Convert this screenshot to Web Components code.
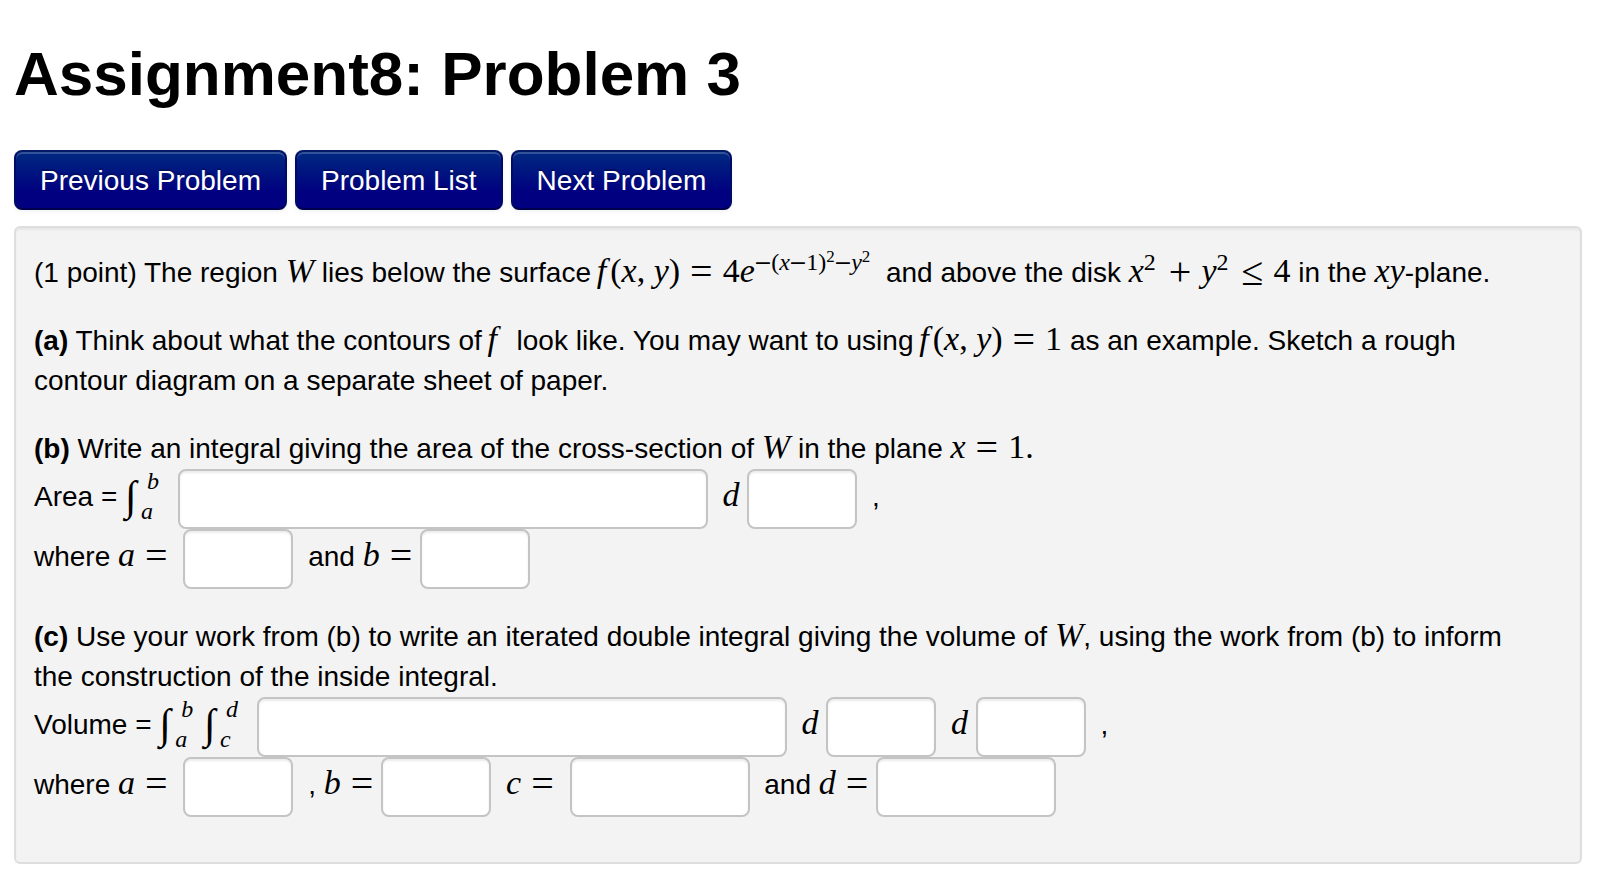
<!DOCTYPE html>
<html lang="en">
<head>
<meta charset="utf-8">
<title>Assignment8: Problem 3</title>
<style>
  body {
    margin: 0;
    padding: 34px 28px 32px 14px;
    background: #fff;
    color: #000;
    font: 28px/40px "Liberation Sans", Arial, sans-serif;
  }
</style>
</head>
<body>
<page-title>Assignment8: Problem 3</page-title>
<problem-nav>
  <nav-button>Previous Problem</nav-button>
  <nav-button>Problem List</nav-button>
  <nav-button>Next Problem</nav-button>
</problem-nav>
<problem-panel>
  <problem-part>(1 point) The region <m-var>W</m-var> lies below the surface <m-fn>f</m-fn><m-num>(</m-num><m-var>x</m-var><m-num>, </m-num><m-var>y</m-var><m-num>)</m-num><m-op>=</m-op><m-num>4</m-num><m-var>e</m-var><m-sup><m-op tight>−</m-op>(<m-var>x</m-var><m-op tight>−</m-op>1)<m-sup>2</m-sup><m-op tight>−</m-op><m-var>y</m-var><m-sup>2</m-sup></m-sup>&nbsp; and above the disk <m-var>x</m-var><m-sup>2</m-sup><m-op loose>+</m-op><m-var>y</m-var><m-sup>2</m-sup><m-op loose>≤</m-op><m-num>4</m-num> in the <m-var>x</m-var><m-var>y</m-var>-plane.</problem-part>
  <problem-part><b>(a)</b> Think about what the contours of <m-fn>f</m-fn>&nbsp; look like. You may want to using <m-fn>f</m-fn><m-num>(</m-num><m-var>x</m-var><m-num>, </m-num><m-var>y</m-var><m-num>)</m-num><m-op>=</m-op><m-num>1</m-num> as an example. Sketch a rough contour diagram on a separate sheet of paper.</problem-part>
  <problem-part><b>(b)</b> Write an integral giving the area of the cross-section of <m-var>W</m-var> in the plane <m-var>x</m-var><m-op>=</m-op><m-num>1.</m-num>
    <answer-row>Area = <m-int upper="b" lower="a"></m-int>&nbsp; <answer-box size="long" label="Integrand of the area"></answer-box> <m-var>d</m-var> <answer-box label="Variable of integration"></answer-box> ,</answer-row>
    <answer-row>where <m-var>a</m-var><m-op>=</m-op> <answer-box label="a"></answer-box> and <m-var>b</m-var><m-op>=</m-op><answer-box label="b"></answer-box></answer-row>
  </problem-part>
  <problem-part><b>(c)</b> Use your work from (b) to write an iterated double integral giving the volume of <m-var>W</m-var>, using the work from (b) to inform the construction of the inside integral.
    <answer-row>Volume = <m-int upper="b" lower="a"></m-int> <m-int upper="d" lower="c"></m-int>&nbsp; <answer-box size="long" label="Integrand of the volume"></answer-box> <m-var>d</m-var> <answer-box label="Inner variable of integration"></answer-box> <m-var>d</m-var> <answer-box label="Outer variable of integration"></answer-box> ,</answer-row>
    <answer-row>where <m-var>a</m-var><m-op>=</m-op> <answer-box label="a"></answer-box> , <m-var>b</m-var><m-op>=</m-op><answer-box label="b"></answer-box> <m-var>c</m-var><m-op>=</m-op> <answer-box size="medium" label="c"></answer-box> and <m-var>d</m-var><m-op>=</m-op><answer-box size="medium" label="d"></answer-box></answer-row>
  </problem-part>
</problem-panel>
<script>
const define = (name, css, html = '<slot></slot>', setup) => {
  const template = document.createElement('template');
  template.innerHTML = `<style>${css}</style>${html}`;
  customElements.define(name, class extends HTMLElement {
    constructor() {
      super();
      this.attachShadow({ mode: 'open' }).append(template.content.cloneNode(true));
    }
    connectedCallback() {
      if (setup) setup(this, this.shadowRoot);
    }
  });
};

const serif = '"Liberation Serif", "Times New Roman", serif';

define('page-title', `
  :host { display: block; }
  h1 { margin: 0; font-size: 62px; line-height: 80px; font-weight: bold; }
`, '<h1><slot></slot></h1>');

define('problem-nav', `
  :host { display: block; margin: 36px 0 16px; }
  nav { display: flex; flex-wrap: wrap; gap: 8px; }
`, '<nav aria-label="Problems"><slot></slot></nav>');

define('nav-button', `
  :host { display: block; }
  button {
    display: block; margin: 0; padding: 9px 24px 7px;
    border: 2px solid; border-color: #001a66 #000b66 #00004d;
    border-radius: 8px;
    background: linear-gradient(#002b80, #000080 70%);
    background-origin: border-box;
    box-shadow: inset 0 2px 0 rgb(255 255 255 / .2), 0 2px 4px rgb(0 0 0 / .05);
    color: #fff; font: inherit; text-shadow: 0 -2px 0 rgb(0 0 0 / .25);
  }
`, '<button type="button"><slot></slot></button>');

define('problem-panel', `
  :host {
    display: flex; flex-direction: column; gap: 28px;
    padding: 25px 32px 45px 18px;
    border: 2px solid #dedede; border-radius: 6px;
    background: #f3f3f3;
    box-shadow: inset 0 2px 2px rgb(0 0 0 / .05);
  }
`);

define('problem-part', ':host { display: block; }');
define('answer-row', ':host { display: block; }');

/* Mathematics: variables, functions, numerals, operators, exponents */
define('m-var', `:host { font: italic 34px/1 ${serif}; line-height: 0; }
  :host-context(m-sup) { font-size: inherit; }`);
define('m-fn', `:host { font: italic 34px/1 ${serif}; line-height: 0; margin: 0 4px 0 -2px; }`);
define('m-num', `:host { font: 34px/1 ${serif}; line-height: 0; }`);
define('m-op', `
  :host { font: 40px/1 ${serif}; line-height: 0; vertical-align: -3px; margin: 0 10px; }
  :host-context(answer-row) { margin-right: 8px; }
  :host([loose]) { margin-left: 13px; }
  :host([tight]) { font: 22px/1 "DejaVu Sans", sans-serif; line-height: 0; vertical-align: baseline; margin: 0 -1px; }
`);
define('m-sup', `
  :host { font: 24px/1 ${serif}; line-height: 0; vertical-align: 12px; }
  ::slotted(m-sup) { font-size: 17px; vertical-align: 8px; }
`);
define('m-int', `
  :host { display: inline-flex; align-items: center; vertical-align: middle; margin-right: 3px; font: italic 24px/30px ${serif}; }
  .sign { width: 16px; font-size: 42px; margin-top: -6px; }
  .limits { display: flex; flex-direction: column; margin-top: -6px; }
  .upper { padding-left: 6px; }
`, '<span class="sign">∫</span><span class="limits"><span class="upper"></span><span class="lower"></span></span>',
(host, root) => {
  root.querySelector('.upper').textContent = host.getAttribute('upper');
  root.querySelector('.lower').textContent = host.getAttribute('lower');
});

define('answer-box', `
  :host { display: inline-block; vertical-align: middle; width: 110px; margin-right: 7px; }
  :host([size="medium"]) { width: 180px; }
  :host([size="long"]) { width: 530px; }
  input {
    display: block; box-sizing: border-box; width: 100%; height: 60px; margin: 0; padding: 8px 12px;
    border: 2px solid #c4c4c4; border-radius: 8px; background: #fff;
    box-shadow: inset 0 2px 2px rgb(0 0 0 / .075);
    font: inherit; color: #555;
  }
`, '<input type="text">', (host, root) => {
  root.querySelector('input').setAttribute('aria-label', host.getAttribute('label'));
});
</script>
</body>
</html>
